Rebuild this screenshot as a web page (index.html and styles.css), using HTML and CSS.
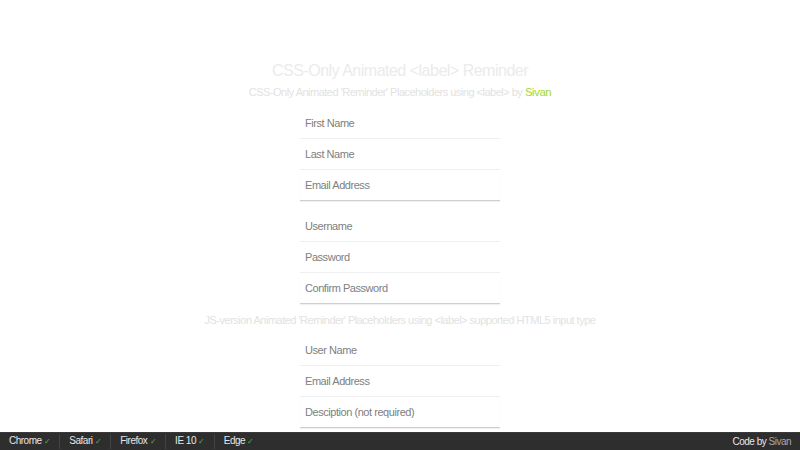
FILE: index.html
```html
<!DOCTYPE html>
<html>
<head>
<meta charset="utf-8">
<link rel="stylesheet" href="styles.css">
</head>
<body>
<main class="page">
  <h1 class="title">CSS-Only Animated &lt;label&gt; Reminder</h1>
  <p class="subtitle">CSS-Only Animated 'Reminder' Placeholders using &lt;label&gt; by <a class="author">Sivan</a></p>
  <div class="group">
    <div class="field">First Name</div>
    <div class="field">Last Name</div>
    <div class="field">Email Address</div>
  </div>
  <div class="group second">
    <div class="field">Username</div>
    <div class="field">Password</div>
    <div class="field">Confirm Password</div>
  </div>
  <p class="subtitle js">JS-version Animated 'Reminder' Placeholders using &lt;label&gt; supported HTML5 input type</p>
  <div class="group">
    <div class="field">User Name</div>
    <div class="field">Email Address</div>
    <div class="field">Desciption (not required)</div>
  </div>
</main>
<footer class="footer">
  <ul class="browsers">
    <li>Chrome <span class="ok">✓</span></li>
    <li>Safari <span class="ok">✓</span></li>
    <li>Firefox <span class="ok">✓</span></li>
    <li>IE 10 <span class="ok">✓</span></li>
    <li>Edge <span class="ok">✓</span></li>
  </ul>
  <div class="credit">Code by <span class="credit-name">Sivan</span></div>
</footer>
</body>
</html>
```
FILE: styles.css
```css
html, body {
  margin: 0;
  padding: 0;
  background: #fff;
  font-family: "Liberation Sans", Arial, sans-serif;
}
.page {
  display: flex;
  flex-direction: column;
  align-items: center;
  padding-top: 61px;
  padding-bottom: 40px;
}
.title {
  margin: 0;
  font-size: 16px;
  letter-spacing: -0.5px;
  line-height: 20px;
  font-weight: normal;
  color: #ebebeb;
}
.subtitle {
  margin: 3px 0 0;
  font-size: 11px;
  letter-spacing: -0.5px;
  line-height: 16px;
  color: #e2e2e2;
}
.author {
  color: #a3d92c;
  font-size: 11.5px;
}
.group {
  width: 200px;
  margin-top: 8px;
  display: flex;
  flex-direction: column;
}
.group.second {
  margin-top: 10px;
}
.subtitle.js {
  margin: 8px 0 -1px;
}
.field {
  height: 30px;
  line-height: 30px;
  padding-left: 5px;
  font-size: 11px;
  letter-spacing: -0.45px;
  color: #808080;
  border-bottom: 1px solid #efefef;
}
.field:last-child {
  border-bottom-color: #cfcfcf;
  box-shadow: 0 1px 1px rgba(0,0,0,0.06);
}
.footer {
  position: fixed;
  left: 0;
  right: 0;
  bottom: 0;
  height: 17px;
  background: #2e2e2e;
  border-top: 1px solid #3a3a3a;
  display: flex;
  justify-content: space-between;
  align-items: center;
  font-size: 10px;
  letter-spacing: -0.5px;
  color: #e6e6e6;
}
.browsers {
  list-style: none;
  margin: 0;
  padding: 0;
  display: flex;
}
.browsers li {
  padding: 0 9px;
  line-height: 14px;
  border-right: 1px solid #444;
}
.browsers li:last-child {
  border-right: none;
}
.ok {
  color: #4caf50;
  font-size: 8px;
}
.credit {
  padding-right: 9px;
}
.credit-name {
  color: #a8a8a8;
}
```
